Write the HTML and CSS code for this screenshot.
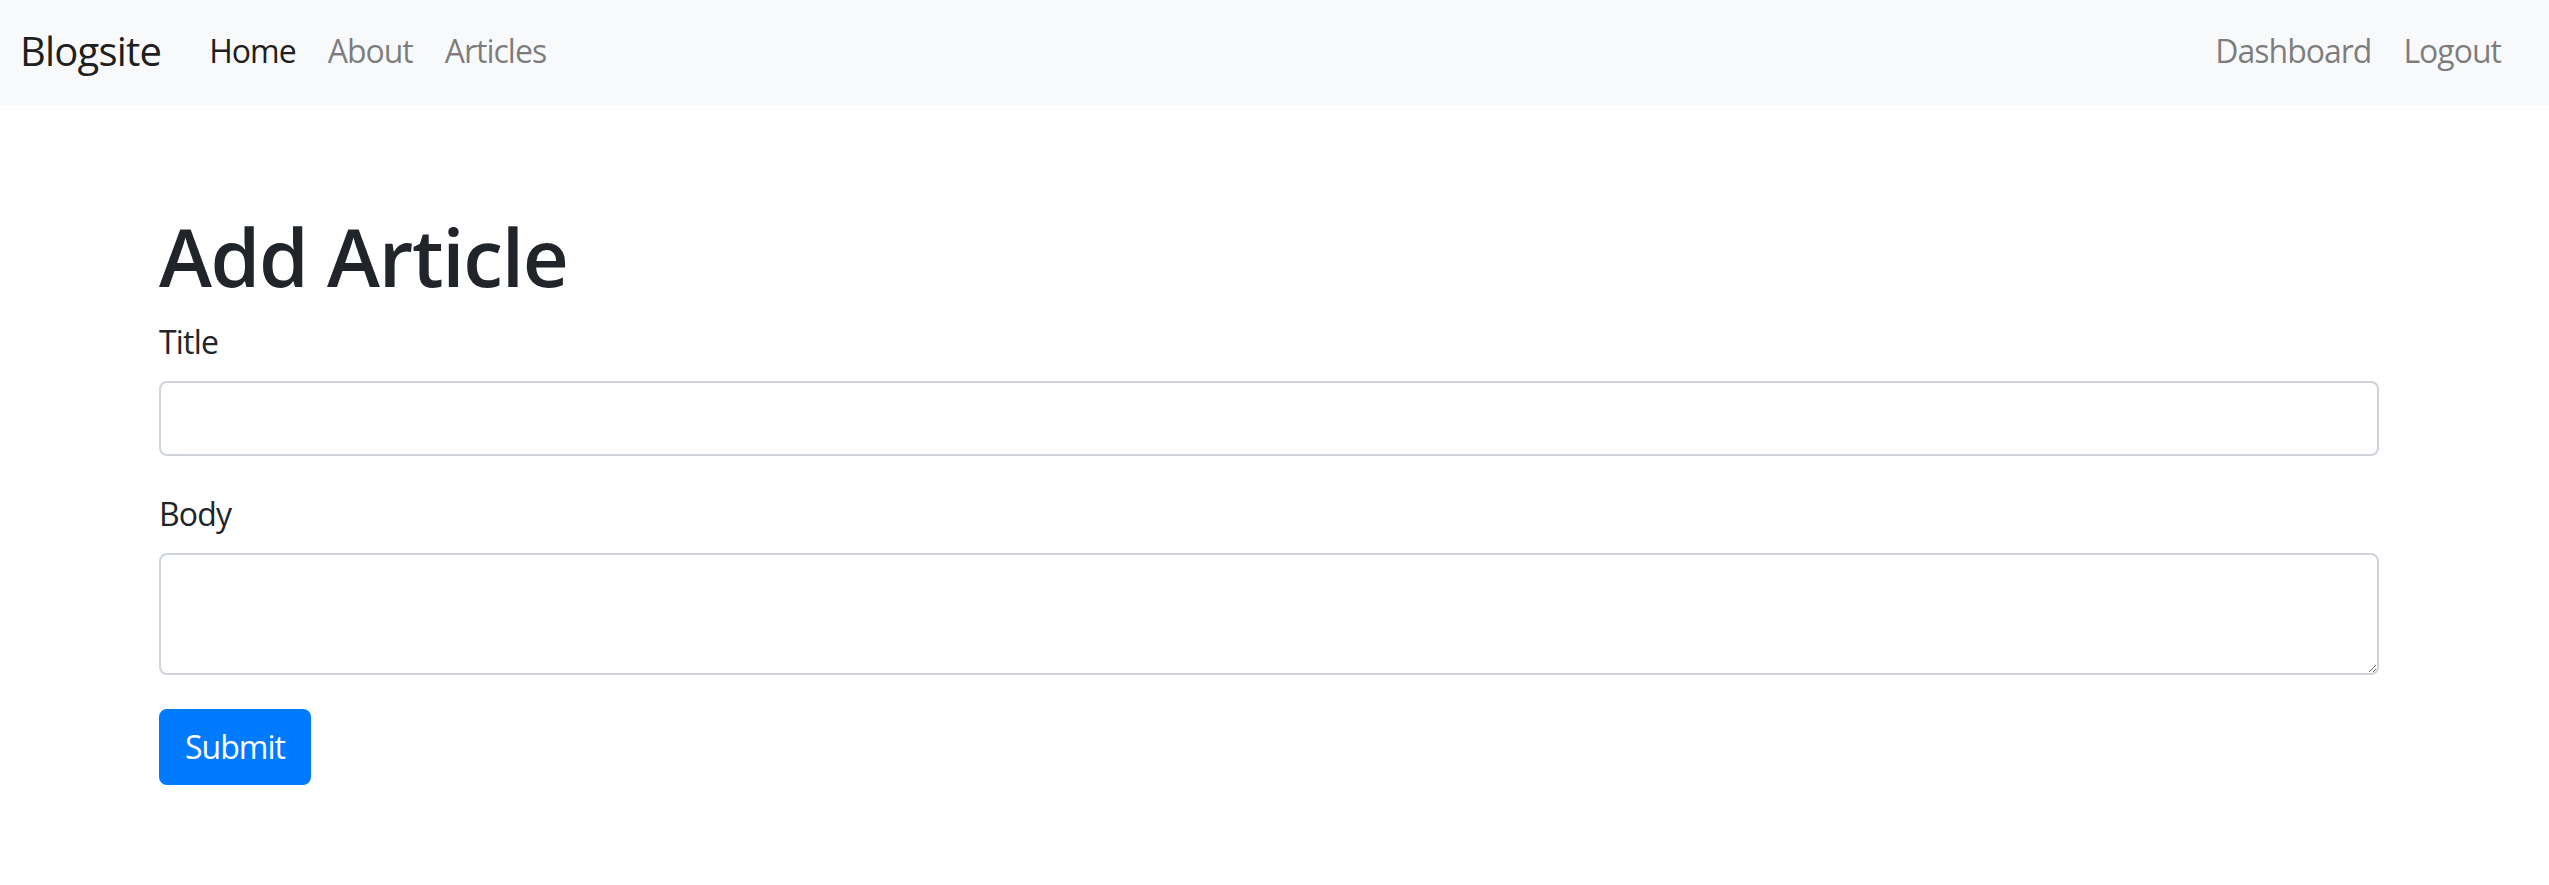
FILE: index.html
```html
<!DOCTYPE html>
<html lang="en">
<head>
<meta charset="utf-8">
<title>Blogsite</title>
<link rel="stylesheet" href="styles.css">
</head>
<body>
<nav class="navbar">
  <a class="brand" href="#">Blogsite</a>
  <ul class="nav-list">
    <li><a class="nav-link active" href="#">Home</a></li>
    <li><a class="nav-link" href="#">About</a></li>
    <li><a class="nav-link" href="#">Articles</a></li>
  </ul>
  <ul class="nav-list nav-right">
    <li><a class="nav-link" href="#">Dashboard</a></li>
    <li><a class="nav-link" href="#">Logout</a></li>
  </ul>
</nav>
<main class="container">
  <h1 class="page-title">Add Article</h1>
  <form class="article-form">
    <div class="form-group">
      <label class="form-label" for="title">Title</label>
      <input class="form-control" id="title" type="text">
    </div>
    <div class="form-group">
      <label class="form-label" for="body">Body</label>
      <textarea class="form-control form-textarea" id="body"></textarea>
    </div>
    <button class="btn-primary" type="submit">Submit</button>
  </form>
</main>
</body>
</html>
```
FILE: styles.css
```css
* { box-sizing: border-box; }
html, body { margin: 0; padding: 0; }
body {
  font-family: "Open Sans", "Noto Sans", sans-serif;
  color: #212529;
  background: #fff;
}
.navbar {
  display: flex;
  align-items: center;
  height: 105px;
  padding: 0 32px 3px 20px;
  background: #f8f9fa;
}
.brand {
  font-size: 40px;
  line-height: 60px;
  letter-spacing: -0.8px;
  color: rgba(0,0,0,.9);
  text-decoration: none;
  margin-right: 32px;
}
.nav-list {
  display: flex;
  list-style: none;
  margin: 0;
  padding: 0;
}
.nav-right { margin-left: auto; }
.nav-link {
  display: block;
  padding: 0 16px;
  font-size: 32px;
  line-height: 48px;
  letter-spacing: -1px;
  color: rgba(0,0,0,.5);
  text-decoration: none;
}
.nav-link.active { color: rgba(0,0,0,.9); }
.container {
  padding: 103px 170px 0 159px;
}
.page-title {
  margin: 0 0 14px;
  font-size: 80px;
  line-height: 96px;
  font-weight: 600;
  letter-spacing: -1.3px;
  color: #212529;
}
.form-group { margin-bottom: 34px; }
.form-label {
  display: block;
  font-size: 32px;
  line-height: 48px;
  letter-spacing: -0.8px;
  margin-bottom: 15px;
}
.form-control {
  display: block;
  width: 100%;
  height: 75px;
  padding: 12px 24px;
  font-family: inherit;
  font-size: 32px;
  border: 2px solid #ced4da;
  border-radius: 8px;
  background: #fff;
  color: #495057;
}
.form-textarea { height: 122px; resize: vertical; }
.btn-primary {
  display: block;
  margin-top: 33px;
  height: 76px;
  padding: 12px 24px;
  font-family: inherit;
  font-size: 32px;
  line-height: 48px;
  letter-spacing: -1px;
  color: #fff;
  background: #007bff;
  border: 2px solid #007bff;
  border-radius: 8px;
}
```
